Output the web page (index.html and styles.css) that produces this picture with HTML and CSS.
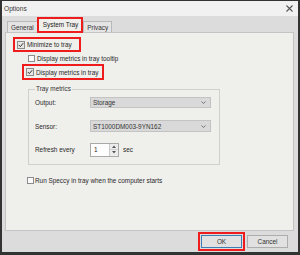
FILE: index.html
```html
<!DOCTYPE html>
<html>
<head>
<meta charset="utf-8">
<link rel="stylesheet" href="styles.css">
</head>
<body>
<div class="win">
  <div class="titlebar">
    <span class="title">Options</span>
    <svg class="close" width="7" height="7" viewBox="0 0 7 7"><path d="M0.5 0.5 L6.5 6.5 M6.5 0.5 L0.5 6.5" stroke="#555" stroke-width="1.1" fill="none"/></svg>
  </div>
  <div class="client">
    <div class="tabs">
      <div class="tab">General</div>
      <div class="tab sel">System Tray</div>
      <div class="tab">Privacy</div>
    </div>
    <div class="panel">
      <div class="chk hl row1"><span class="box on"><svg width="6" height="6" viewBox="0 0 6 6"><path d="M0.8 3 L2.4 4.6 L5.2 1.2" stroke="#333" stroke-width="1" fill="none"/></svg></span><span>Minimize to tray</span></div>
      <div class="chk row2"><span class="box"></span><span>Display metrics in tray tooltip</span></div>
      <div class="chk hl row3"><span class="box on"><svg width="6" height="6" viewBox="0 0 6 6"><path d="M0.8 3 L2.4 4.6 L5.2 1.2" stroke="#333" stroke-width="1" fill="none"/></svg></span><span>Display metrics in tray</span></div>
      <fieldset class="group">
        <legend>Tray metrics</legend>
        <div class="grid">
          <span class="lbl">Output:</span>
          <div class="select s1"><span>Storage</span><svg width="5" height="3" viewBox="0 0 5 3"><path d="M0.5 0.5 L2.5 2.5 L4.5 0.5" stroke="#666" stroke-width="0.9" fill="none"/></svg></div>
          <span class="lbl">Sensor:</span>
          <div class="select s2"><span>ST1000DM003-9YN162</span><svg width="5" height="3" viewBox="0 0 5 3"><path d="M0.5 0.5 L2.5 2.5 L4.5 0.5" stroke="#666" stroke-width="0.9" fill="none"/></svg></div>
          <span class="lbl">Refresh every</span>
          <div class="spinrow">
            <div class="spin"><span class="val">1</span><div class="arrows"><span class="up"><svg width="4" height="3" viewBox="0 0 4 3"><path d="M0 3 L2 0.5 L4 3 Z" fill="#555"/></svg></span><span class="down"><svg width="4" height="3" viewBox="0 0 4 3"><path d="M0 0 L2 2.5 L4 0 Z" fill="#555"/></svg></span></div></div>
            <span class="sec">sec</span>
          </div>
        </div>
      </fieldset>
      <div class="chk run"><span class="box"></span><span>Run Speccy in tray when the computer starts</span></div>
    </div>
    <div class="footer">
      <div class="okwrap"><button class="btn ok">OK</button></div>
      <button class="btn cancel">Cancel</button>
    </div>
  </div>
</div>
</body>
</html>
```

FILE: styles.css
```css
* { box-sizing: border-box; }
html, body { margin: 0; padding: 0; }
body {
  width: 300px;
  height: 255px;
  overflow: hidden;
  background: #2e2e2e;
  font-family: "Liberation Sans", Arial, sans-serif;
  font-size: 6.4px;
  color: #2a2a2a;
}
.win {
  width: 300px;
  height: 255px;
  border-style: solid;
  border-color: #333;
  border-width: 1px 2px 3px 2px;
  display: flex;
  flex-direction: column;
  background: #dedede;
}
.titlebar {
  height: 15px;
  flex: none;
  background: #f1f1f1;
  display: flex;
  align-items: center;
  justify-content: space-between;
  padding: 0 5px 1px 2px;
}
.title { font-size: 6.6px; color: #3a3a3a; }
.close { display: block; margin-top: 0; }
.client {
  flex: 1;
  display: flex;
  flex-direction: column;
  padding: 0 4px 0 3px;
  background: #dcdcdc;
}
.tabs {
  height: 16px;
  flex: none;
  display: flex;
  align-items: flex-end;
  padding-left: 2px;
  position: relative;
  z-index: 1;
}
.tab {
  height: 11px;
  padding: 0 3px;
  display: flex;
  align-items: center;
  border: 1px solid #b9b9b9;
  border-bottom: none;
  background: #e4e4e4;
  color: #333;
}
.tab.sel {
  height: 16px;
  margin-bottom: -1px;
  padding: 0 3px 1px 4px;
  background: #efefec;
  border: 2px solid #ee1c1c;
  color: #222;
}
.tab:first-child { border-right: none; }
.panel {
  flex: 1;
  background: #efefec;
  border: 1px solid #c4c4c4;
  display: flex;
  flex-direction: column;
  align-items: flex-start;
}
.chk {
  display: flex;
  align-items: center;
  gap: 2px;
  white-space: nowrap;
}
.hl { border: 2px solid #ee1c1c; padding-left: 2px; }
.box {
  width: 8px;
  height: 8px;
  flex: none;
  border: 1px solid #8c8c8c;
  background: #fbfbfb;
  display: flex;
  align-items: center;
  justify-content: center;
}
.box.on { background: #e6e6e6; }
.box svg { display: block; }
.row1 { margin: 4px 0 0 7px; width: 68px; height: 15px; }
.row2 { margin: 2px 0 0 22px; height: 9px; }
.row2 .box { width: 7px; height: 7px; }
.row3 { margin: 1px 0 0 16px; width: 82px; height: 16px; }
.group {
  margin: 5px 0 0 22px;
  width: 192px;
  border: 1px solid #cfcfcf;
  padding: 0 7px 6px 6px;
  min-width: 0;
}
.group legend {
  padding: 0 1px;
  height: 8px;
  line-height: 8px;
  color: #333;
}
.grid {
  margin-top: 4px;
  display: grid;
  grid-template-columns: 55px 121px;
  grid-template-rows: 11px 12px 14px;
  row-gap: 12px;
  align-items: center;
}
.grid .lbl:nth-of-type(5) { }
.grid > :nth-child(5), .grid > :nth-child(6) { margin-top: -3px; }
.select {
  height: 100%;
  background: #d9d9d9;
  border: 1px solid #c3c3c3;
  display: flex;
  align-items: center;
  justify-content: space-between;
  padding: 0 4px 0 2px;
  color: #333;
}
.select svg { display: block; }
.spinrow {
  display: flex;
  align-items: center;
  gap: 4px;
  height: 14px;
}
.spin {
  width: 29px;
  height: 14px;
  background: #fdfdfd;
  border: 1px solid #a9a9a9;
  display: flex;
  justify-content: space-between;
}
.val { padding-left: 3px; display: flex; align-items: center; }
.arrows {
  width: 9px;
  display: flex;
  flex-direction: column;
  border-left: 1px solid #c9c9c9;
}
.arrows span {
  flex: 1;
  display: flex;
  align-items: center;
  justify-content: center;
  background: #ececec;
}
.arrows .up { border-bottom: 1px solid #d0d0d0; }
.arrows svg { display: block; }
.run { margin: 11px 0 0 21px; height: 9px; gap: 1px; }
.run .box { width: 7px; height: 7px; }
.footer {
  height: 21px;
  flex: none;
  display: flex;
  align-items: center;
  justify-content: flex-end;
  padding-right: 6px;
  gap: 2px;
}
.okwrap {
  border: 2px solid #ee1c1c;
  padding: 1px;
  display: flex;
}
.btn {
  font-family: "Liberation Sans", Arial, sans-serif;
  font-size: 6.4px;
  color: #333;
  width: 41px;
  height: 13px;
  padding: 0;
  margin: 0;
  background: #e1e1e1;
  border: 1px solid #adadad;
  display: flex;
  align-items: center;
  justify-content: center;
}
.btn.ok { border-color: #3d7fb5; }
```
